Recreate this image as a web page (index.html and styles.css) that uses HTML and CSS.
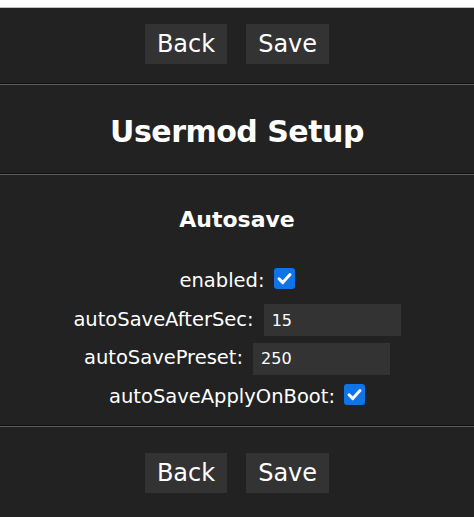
FILE: index.html
```html
<!DOCTYPE html>
<html lang="en">
<head>
<meta charset="utf-8">
<title>Usermod Setup</title>
<link rel="stylesheet" href="styles.css">
</head>
<body>
<div class="chrome"></div>
<main class="page">
  <div class="actions actions-top">
    <button class="btn" type="button">Back</button>
    <button class="btn" type="button">Save</button>
  </div>
  <hr class="rule">
  <h2 class="title">Usermod Setup</h2>
  <hr class="rule">
  <section class="mod">
    <h3 class="mod-name">Autosave</h3>
    <div class="row">enabled:<span class="check" role="checkbox" aria-checked="true"><svg viewBox="0 0 21 21" width="21" height="21"><path d="M5 10.8 L8.8 14.6 L16 6.6" fill="none" stroke="#fff" stroke-width="3" stroke-linecap="round" stroke-linejoin="round"/></svg></span></div>
    <div class="row">autoSaveAfterSec:<input class="field" type="text" value="15"></div>
    <div class="row">autoSavePreset:<input class="field" type="text" value="250"></div>
    <div class="row">autoSaveApplyOnBoot:<span class="check" role="checkbox" aria-checked="true"><svg viewBox="0 0 21 21" width="21" height="21"><path d="M5 10.8 L8.8 14.6 L16 6.6" fill="none" stroke="#fff" stroke-width="3" stroke-linecap="round" stroke-linejoin="round"/></svg></span></div>
  </section>
  <hr class="rule rule-end">
  <div class="actions actions-bottom">
    <button class="btn" type="button">Back</button>
    <button class="btn" type="button">Save</button>
  </div>
</main>
</body>
</html>
```

FILE: styles.css
```css
html {
  background: #222;
}
body {
  margin: 0;
  background: #222;
  color: #fff;
  font-family: "DejaVu Sans", Verdana, sans-serif;
  text-align: center;
}
.chrome {
  height: 7px;
  background: #fff;
  border-bottom: 1px solid #c2c2c2;
}
.page {
  display: flex;
  flex-direction: column;
}
.actions {
  display: flex;
  justify-content: center;
  gap: 19px;
}
.actions-top {
  padding: 16px 0 19px;
}
.actions-bottom {
  padding: 26px 0 20px;
}
.btn {
  height: 40px;
  margin: 0;
  padding: 1px 12px 0;
  border: 0;
  background: #333;
  color: #fff;
  font-family: "DejaVu Sans", Verdana, sans-serif;
  font-size: 24px;
  line-height: 39px;
}
.rule {
  margin: 0;
  height: 0;
  border: 0;
  border-top: 1px solid #111;
  border-bottom: 1px solid #5c5c5c;
}
.title {
  margin: 27px 0 21px;
  font-size: 30px;
  letter-spacing: -0.5px;
  line-height: 40px;
  font-weight: bold;
}
.mod {
  padding-bottom: 9px;
}
.mod-name {
  margin: 30px 0 27px;
  font-size: 22px;
  line-height: 30px;
  font-weight: bold;
}
.row {
  font-size: 19.5px;
  line-height: 38.5px;
  white-space: nowrap;
}
.check {
  display: inline-block;
  width: 21px;
  height: 21px;
  margin-left: 9px;
  border-radius: 3px;
  background: #0f74e8;
  vertical-align: -2px;
}
.check svg {
  display: block;
}
.field {
  box-sizing: border-box;
  width: 137px;
  height: 32px;
  margin: 0 0 0 10px;
  padding: 0 8px;
  border: 0;
  background: #333;
  color: #fff;
  font-family: "DejaVu Sans", Verdana, sans-serif;
  font-size: 16px;
}
```
